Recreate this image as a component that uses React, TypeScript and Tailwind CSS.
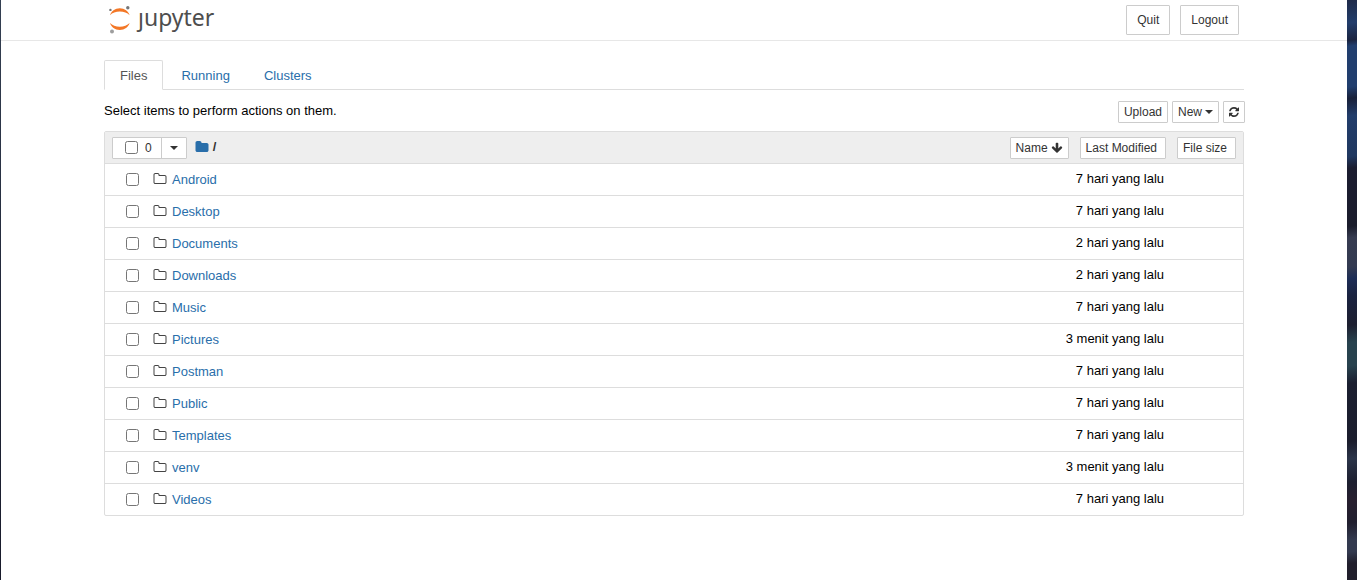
import { useState } from 'react';
import type { ReactNode } from 'react';

const FILES = [
  { name: 'Android', modified: '7 hari yang lalu' },
  { name: 'Desktop', modified: '7 hari yang lalu' },
  { name: 'Documents', modified: '2 hari yang lalu' },
  { name: 'Downloads', modified: '2 hari yang lalu' },
  { name: 'Music', modified: '7 hari yang lalu' },
  { name: 'Pictures', modified: '3 menit yang lalu' },
  { name: 'Postman', modified: '7 hari yang lalu' },
  { name: 'Public', modified: '7 hari yang lalu' },
  { name: 'Templates', modified: '7 hari yang lalu' },
  { name: 'venv', modified: '3 menit yang lalu' },
  { name: 'Videos', modified: '7 hari yang lalu' },
];

const ICONS = {
  folder: {
    viewBox: '0 0 1792 1792',
    path: 'M1728 608v704q0 92-66 158t-158 66h-1216q-92 0-158-66t-66-158v-960q0-92 66-158t158-66h320q92 0 158 66t66 158v32h672q92 0 158 66t66 158z',
  },
  folderOutline: {
    viewBox: '0 0 1792 1792',
    path: 'M1600 1312v-704q0-40-28-68t-68-28h-704q-40 0-68-28t-28-68v-64q0-40-28-68t-68-28h-320q-40 0-68 28t-28 68v960q0 40 28 68t68 28h1216q40 0 68-28t28-68zm128-704v704q0 92-66 158t-158 66h-1216q-92 0-158-66t-66-158v-960q0-92 66-158t158-66h320q92 0 158 66t66 158v32h672q92 0 158 66t66 158z',
  },
  refresh: {
    viewBox: '128 0 1536 1792',
    path: 'M1639 1056q0 5-1 7-64 268-268 434.5t-478 166.5q-146 0-282.5-55t-243.5-157l-129 129q-19 19-45 19t-45-19-19-45v-448q0-26 19-45t45-19h448q26 0 45 19t19 45-19 45l-137 137q71 66 161 102t187 36q134 0 250-65t186-179q11-17 53-117 8-23 30-23h192q13 0 22.5 9.5t9.5 22.5zm25-800v448q0 26-19 45t-45 19h-448q-26 0-45-19t-19-45 19-45l138-138q-148-137-349-137-134 0-250 65t-186 179q-11 17-53 117-8 23-30 23h-199q-13 0-22.5-9.5t-9.5-22.5v-7q65-268 270-434.5t480-166.5q146 0 284 55.5t245 156.5l130-129q19-19 45-19t45 19 19 45z',
  },
  arrowDown: {
    viewBox: '0 0 1792 1792',
    path: 'M1675 832q0 53-37 90l-651 652q-39 37-91 37-53 0-90-37l-651-652q-38-36-38-90 0-53 38-91l74-75q39-37 91-37 53 0 90 37l294 294v-704q0-52 38-90t90-38h128q52 0 90 38t38 90v704l294-294q37-37 90-37 52 0 91 37l75 75q37 39 37 91z',
  },
};

const Icon = ({ name, className }: { name: keyof typeof ICONS; className: string }) => (
  <svg viewBox={ICONS[name].viewBox} fill="currentColor" aria-hidden="true" className={`shrink-0 ${className}`}>
    <path d={ICONS[name].path} />
  </svg>
);

const Caret = () => (
  <svg viewBox="0 0 8 4" fill="currentColor" aria-hidden="true" className="h-1 w-2 shrink-0">
    <path d="M0 0h8L4 4z" />
  </svg>
);

const Logo = () => (
  <a href="#" aria-label="Jupyter" className="flex items-start text-[#4e4e4e]">
    <svg viewBox="0 2 32 36" aria-hidden="true" className="h-9 w-8">
      <path fill="#f37726" d="M6 15.200C7.200 11.200 11 8.200 15.800 8.200s8.600 3 9.800 7c-2.300-2.400-5.800-3.700-9.800-3.700s-7.500 1.300-9.800 3.700z" />
      <path fill="#f37726" d="M6 23c1.200 4 5 7 9.800 7s8.600-3 9.800-7c-2.300 2.400-5.800 3.700-9.800 3.700s-7.500-1.300-9.800-3.700z" />
      <circle cx="23.800" cy="7.700" r="1.700" fill="#767677" />
      <circle cx="6.400" cy="9.900" r="1.200" fill="#767677" />
      <circle cx="8" cy="31.500" r="2" fill="#9e9e9e" />
    </svg>
    <span className="pl-[2px] font-['Noto_Sans',sans-serif] text-[23px] leading-[30px]">ȷupyter</span>
  </a>
);

const SmallButton = ({ children, label }: { children: ReactNode; label?: string }) => (
  <button
    type="button"
    aria-label={label}
    className="flex h-[22px] items-center gap-[3px] rounded-[1px] border border-[#ccc] bg-white px-[5px] text-xs text-[#333] hover:bg-[#ebebeb]"
  >
    {children}
  </button>
);

const Header = () => (
  <header className="border-b border-[#e7e7e7]">
    <div className="mx-auto flex h-10 max-w-[1140px] items-center justify-between">
      <Logo />
      <div className="flex gap-[10px] pr-[5px]">
        {['Quit', 'Logout'].map((label) => (
          <button
            key={label}
            type="button"
            className="h-[30px] rounded-[1px] border border-[#ccc] bg-white px-[10px] text-xs text-[#333] hover:bg-[#ebebeb]"
          >
            {label}
          </button>
        ))}
      </div>
    </div>
  </header>
);

const Tabs = () => (
  <nav className="flex gap-[2px] border-b border-[#ddd]">
    <a
      href="#notebooks"
      aria-current="page"
      className="-mb-px h-[30px] rounded-t-[2px] border border-[#ddd] border-b-white bg-white px-[15px] leading-[30px] text-[#555]"
    >
      Files
    </a>
    <a href="#running" className="h-[29px] border border-transparent px-[15px] leading-[30px] text-[#296eaa]">
      Running
    </a>
    <a href="#clusters" className="h-[29px] border border-transparent px-[15px] leading-[30px] text-[#296eaa]">
      Clusters
    </a>
  </nav>
);

const App = () => {
  const [selected, setSelected] = useState<string[]>([]);

  const toggle = (name: string) =>
    setSelected((prev) => (prev.includes(name) ? prev.filter((n) => n !== name) : [...prev, name]));

  const toggleAll = () => setSelected(selected.length === FILES.length ? [] : FILES.map((f) => f.name));

  return (
    <div className="flex min-h-screen bg-white font-['Liberation_Sans',Arial,sans-serif] text-[13px] leading-5 text-black">
      {/* desktop showing on both sides of the window */}
      <div className="w-px shrink-0 bg-linear-to-b from-[#344052] via-[#22283a] to-[#181b2b]" />

      <div className="min-w-0 flex-1">
        <Header />

        <main className="mx-auto max-w-[1140px] pt-[19px]">
          <Tabs />

          <div className="flex justify-between pt-[11px]">
            <p>Select items to perform actions on them.</p>
            <div className="-mr-px flex gap-1">
              <SmallButton>Upload</SmallButton>
              <SmallButton>
                New <Caret />
              </SmallButton>
              <SmallButton label="Refresh notebook list">
                <Icon name="refresh" className="h-3 w-[10px]" />
              </SmallButton>
            </div>
          </div>

          <section className="mt-2 rounded-[2px] border border-[#ddd]">
            <div className="flex h-[31px] items-center bg-[#eee] px-[7px]">
              <div className="flex h-[22px] rounded-[1px] border border-[#ccc] bg-white text-xs text-[#333]">
                <label className="flex items-center gap-[7px] pr-[9px] pl-3">
                  <input
                    type="checkbox"
                    aria-label="Select all"
                    checked={selected.length === FILES.length}
                    onChange={toggleAll}
                    className="size-[13px]"
                  />
                  {selected.length}
                </label>
                <button
                  type="button"
                  aria-label="Select by type"
                  className="flex w-[25px] items-center justify-center border-l border-[#ccc]"
                >
                  <Caret />
                </button>
              </div>
              <div className="flex items-center gap-1 pb-[2px] pl-2 font-bold text-[#333]">
                <a href="#" aria-label="Home" className="text-[#296eaa]">
                  <Icon name="folder" className="size-[14px]" />
                </a>
                <span>/</span>
              </div>
              <div className="ml-auto flex gap-[11px]">
                <SmallButton>
                  Name <Icon name="arrowDown" className="size-3" />
                </SmallButton>
                <SmallButton>
                  <span className="pr-[3px]">Last Modified</span>
                </SmallButton>
                <SmallButton>
                  <span className="pr-[3px]">File size</span>
                </SmallButton>
              </div>
            </div>

            <ul>
              {FILES.map((file) => (
                <li key={file.name} className="flex h-8 items-center border-t border-[#ddd] pr-[79px] pl-[21px]">
                  <input
                    type="checkbox"
                    aria-label={`Select ${file.name}`}
                    checked={selected.includes(file.name)}
                    onChange={() => toggle(file.name)}
                    className="size-[13px]"
                  />
                  <Icon name="folderOutline" className="mb-[2px] ml-[14px] size-[14px] text-[#444]" />
                  <a href={`#${file.name}`} className="ml-[5px] text-[#296eaa] hover:underline">
                    {file.name}
                  </a>
                  <span className="ml-auto pb-[2px]">{file.modified}</span>
                </li>
              ))}
            </ul>
          </section>
        </main>
      </div>

      <div className="w-[10px] shrink-0 bg-[linear-gradient(172deg,#1f2b49_0%,#223d6b_4%,#1b2440_7%,#213e6e_8%,#213e6e_15%,#182039_17%,#223d6b_20%,#203860_27%,#1b1d30_29%,#1b1d2c_39%,#363b50_41%,#333a51_46%,#1d2d56_48%,#1a2340_51%,#1d1f30_56%,#28424e_59%,#28424e_63%,#1b1f30_66%,#1b1d2d_76%,#2b3449_79%,#1d1f30_83%,#271f2f_86%,#211f2f_90%,#333a4f_93%,#333a4f_95%,#211f2c_97%)]" />
    </div>
  );
};

export default App;
